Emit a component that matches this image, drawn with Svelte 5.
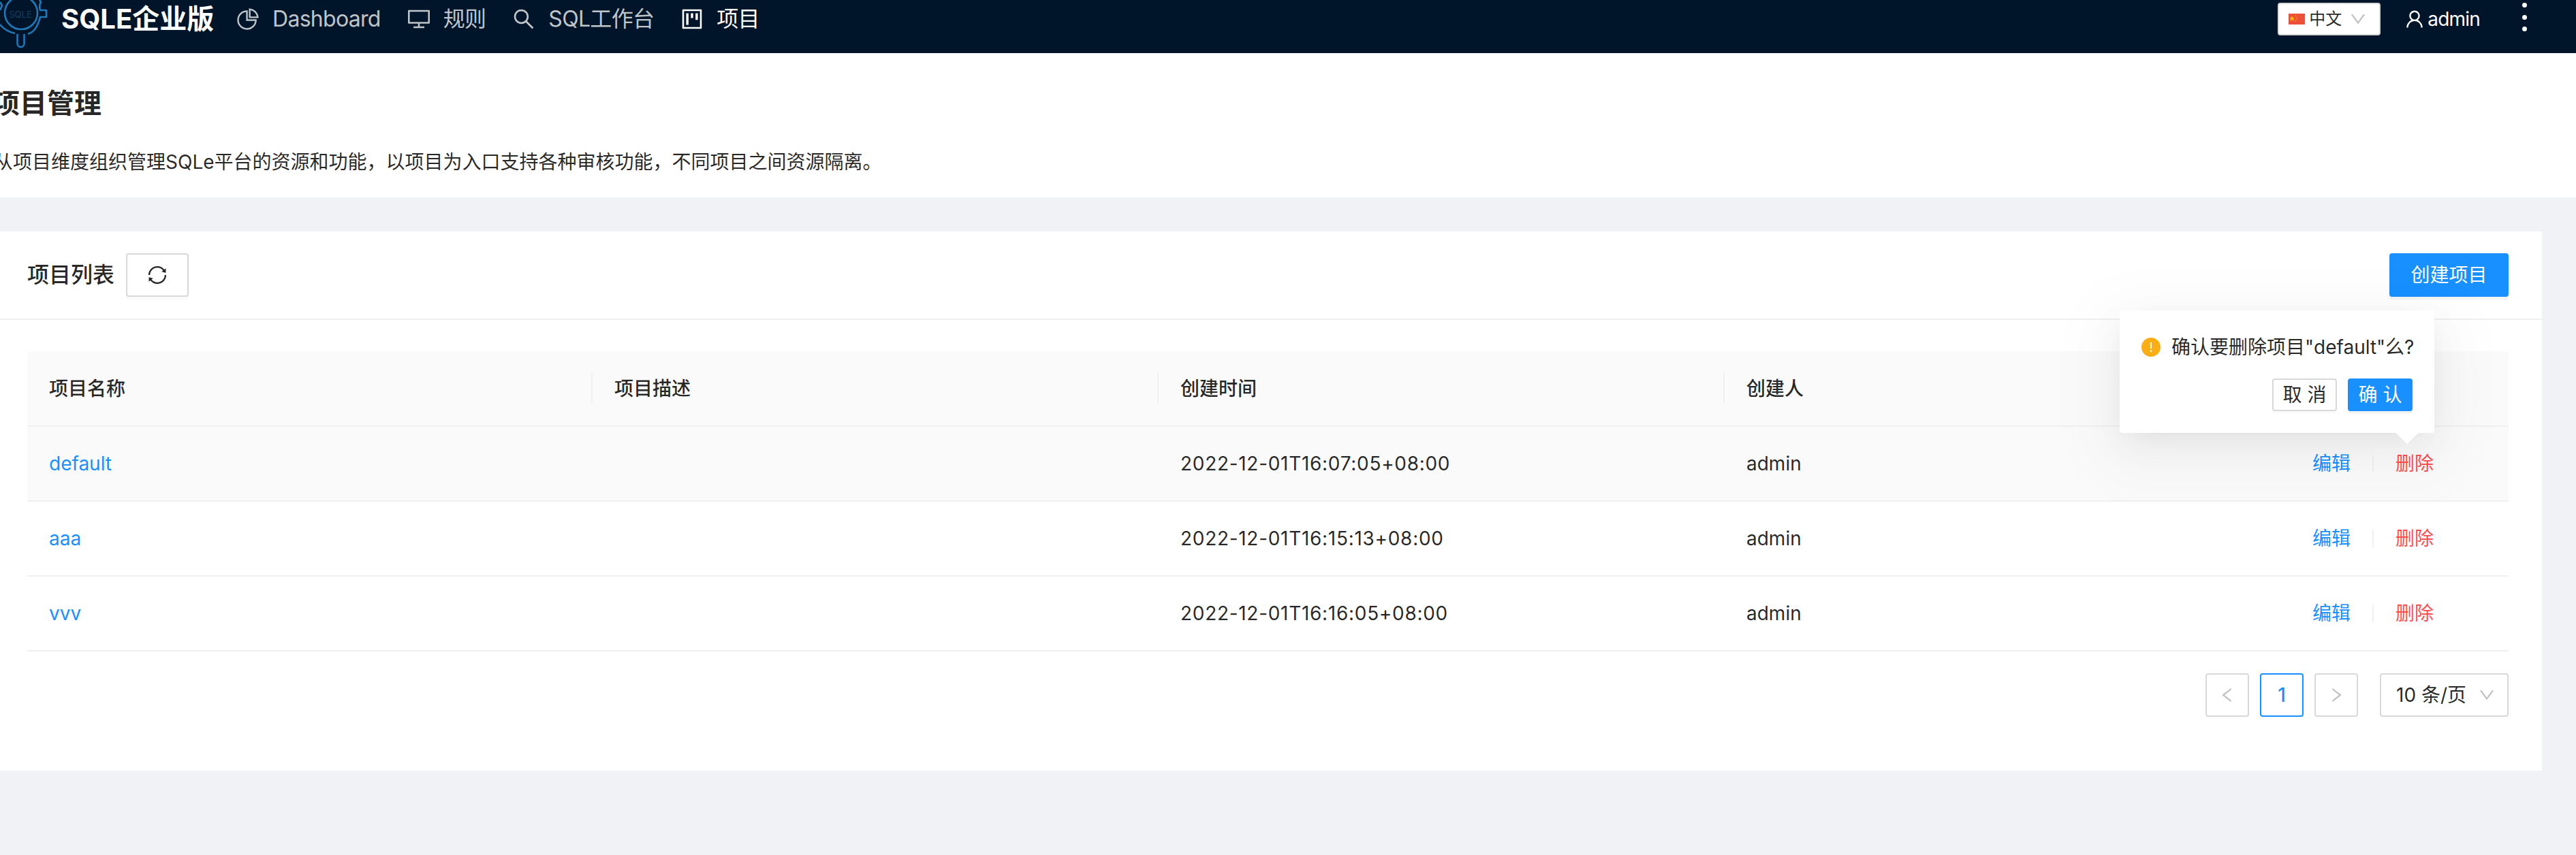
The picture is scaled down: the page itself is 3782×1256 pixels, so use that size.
<script lang="ts">
	const rows = [
		{ name: 'default', time: '2022-12-01T16:07:05+08:00', creator: 'admin', active: true },
		{ name: 'aaa', time: '2022-12-01T16:15:13+08:00', creator: 'admin', active: false },
		{ name: 'vvv', time: '2022-12-01T16:16:05+08:00', creator: 'admin', active: false }
	];

	const paths = {
		pie: 'M864 518H506V160c0-4.4-3.6-8-8-8h-26a398.46 398.46 0 0 0-282.8 117.1 398.19 398.19 0 0 0-85.7 127.1A397.61 397.61 0 0 0 72 552a398.46 398.46 0 0 0 117.1 282.8c36.7 36.7 79.5 65.6 127.1 85.7A397.61 397.61 0 0 0 472 952a398.46 398.46 0 0 0 282.8-117.1c36.7-36.7 65.6-79.5 85.7-127.1A397.61 397.61 0 0 0 872 552v-26c0-4.4-3.6-8-8-8zM705.7 787.8A331.59 331.59 0 0 1 470.4 884c-88.1-.4-170.9-34.9-233.2-97.2C174.5 724.1 140 640.7 140 552c0-88.7 34.5-172.1 97.2-234.8 54.6-54.6 124.9-87.9 200.8-95.5V586h364.3c-7.7 76.3-41.3 147-96.6 201.8zM952 462.4l-2.6-28.2c-8.5-92.1-49.4-179-115.2-244.6A399.4 399.4 0 0 0 589 74.6L560.7 72c-4.7-.4-8.7 3.2-8.7 7.9V464c0 4.4 3.6 8 8 8l384-1c4.7 0 8.4-4 8-8.6zm-332.2-58.2V147.6a332.24 332.24 0 0 1 166.4 89.8c45.7 45.6 77 103.6 90 166.1l-256.4.7z',
		desktop: 'M928 140H96c-17.7 0-32 14.3-32 32v496c0 17.7 14.3 32 32 32h380v112H304c-8.8 0-16 7.2-16 16v48c0 4.4 3.6 8 8 8h432c4.4 0 8-3.6 8-8v-48c0-8.8-7.2-16-16-16H548V700h380c17.7 0 32-14.3 32-32V172c0-17.7-14.3-32-32-32zm-40 488H136V212h752v416z',
		search: 'M909.6 854.5L649.9 594.8C690.2 542.7 712 479 712 412c0-80.2-31.3-155.4-87.9-212.1-56.6-56.7-132-87.9-212.1-87.9s-155.5 31.3-212.1 87.9C143.2 256.5 112 331.8 112 412c0 80.1 31.3 155.5 87.9 212.1C256.5 680.8 331.8 712 412 712c67 0 130.6-21.8 182.7-62l259.7 259.6a8.2 8.2 0 0 0 11.6 0l43.6-43.5a8.2 8.2 0 0 0 0-11.6zM570.4 570.4C528 612.7 471.8 636 412 636s-116-23.3-158.4-65.6C211.3 528 188 471.8 188 412s23.3-116.1 65.6-158.4C296 211.3 352.2 188 412 188s116.1 23.2 158.4 65.6S636 352.2 636 412s-23.3 116.1-65.6 158.4z',
		project: 'M280 752h80c4.4 0 8-3.6 8-8V280c0-4.4-3.6-8-8-8h-80c-4.4 0-8 3.6-8 8v464c0 4.4 3.6 8 8 8zm192-280h80c4.4 0 8-3.6 8-8V280c0-4.4-3.6-8-8-8h-80c-4.4 0-8 3.6-8 8v184c0 4.4 3.6 8 8 8zm192 72h80c4.4 0 8-3.6 8-8V280c0-4.4-3.6-8-8-8h-80c-4.4 0-8 3.6-8 8v256c0 4.4 3.6 8 8 8zm216-432H144c-17.7 0-32 14.3-32 32v736c0 17.7 14.3 32 32 32h736c17.7 0 32-14.3 32-32V144c0-17.7-14.3-32-32-32zm-40 728H184V184h656v656z',
		user: 'M858.5 763.6a374 374 0 0 0-80.6-119.5 375.63 375.63 0 0 0-119.5-80.6c-.4-.2-.8-.3-1.2-.5C719.5 518 760 444.7 760 362c0-137-111-248-248-248S264 225 264 362c0 82.7 40.5 156 102.8 201.1-.4.2-.8.3-1.2.5-44.8 18.9-85 46-119.5 80.6a375.63 375.63 0 0 0-80.6 119.5A371.7 371.7 0 0 0 136 901.8a8 8 0 0 0 8 8.2h60c4.4 0 8-3.5 8-7.8 2-77.2 33-149.5 87.8-204.3 56.7-56.7 132-87.9 212.2-87.9s155.5 31.2 212.2 87.9C779 752.7 810 825 812 902.2c.1 4.4 3.6 7.8 8 7.8h60a8 8 0 0 0 8-8.2c-1-47.8-10.9-94.3-29.5-138.2zM512 534c-45.9 0-89.1-17.9-121.6-50.4S340 407.9 340 362c0-45.9 17.9-89.1 50.4-121.6S466.1 190 512 190s89.1 17.9 121.6 50.4S684 316.1 684 362c0 45.9-17.9 89.1-50.4 121.6S557.9 534 512 534z',
		sync: 'M168 504.2c1-43.7 10-86.1 26.9-126 17.3-41 42.1-77.7 73.7-109.4S337 212.3 378 195c42.4-17.9 87.4-27 133.9-27s91.5 9.1 133.8 27A341.5 341.5 0 0 1 755 268.8c9.9 9.9 19.2 20.4 27.8 31.4l-60.2 47a8 8 0 0 0 3 14.1l175.7 43c5 1.2 9.9-2.6 9.9-7.7l.8-180.9c0-6.7-7.7-10.5-12.9-6.3l-56.4 44.1C765.8 155.1 646.2 92 511.8 92 282.7 92 96.3 275.6 92 503.8a8 8 0 0 0 8 8.2h60c4.4 0 7.9-3.5 8-7.8zm756 7.8h-60c-4.4 0-7.9 3.5-8 7.8-1 43.7-10 86.1-26.9 126-17.3 41-42.1 77.8-73.7 109.4A342.45 342.45 0 0 1 512.1 856a342.24 342.24 0 0 1-243.2-100.8c-9.9-9.9-19.2-20.4-27.8-31.4l60.2-47a8 8 0 0 0-3-14.1l-175.7-43c-5-1.2-9.9 2.6-9.9 7.7l-.7 181c0 6.7 7.7 10.5 12.9 6.3l56.4-44.1C258.2 868.9 377.8 932 512.2 932c229.2 0 415.5-183.7 419.8-411.8a8 8 0 0 0-8-8.2z',
		warn: 'M512 64C264.6 64 64 264.6 64 512s200.6 448 448 448 448-200.6 448-448S759.4 64 512 64zm-32 232c0-4.4 3.6-8 8-8h48c4.4 0 8 3.6 8 8v272c0 4.4-3.6 8-8 8h-48c-4.4 0-8-3.6-8-8V296zm32 440a48.01 48.01 0 0 1 0-96 48.01 48.01 0 0 1 0 96z',
		down: 'M884 256h-75c-5.1 0-9.9 2.5-12.9 6.6L512 654.2 227.9 262.6c-3-4.1-7.8-6.6-12.9-6.6h-75c-6.5 0-10.3 7.4-6.5 12.7l352.6 486.1c12.8 17.6 39 17.6 51.7 0l352.6-486.1c3.9-5.3.1-12.7-6.4-12.7z',
		left: 'M724 218.3V141c0-6.7-7.7-10.4-12.9-6.3L260.3 486.8a31.86 31.86 0 0 0 0 50.3l450.8 352.1c5.3 4.1 12.9.4 12.9-6.3v-77.3c0-4.9-2.3-9.6-6.1-12.6l-360-281 360-281.1c3.8-3 6.1-7.7 6.1-12.6z',
		right: 'M765.7 486.8L314.9 134.7A7.97 7.97 0 0 0 302 141v77.3c0 4.9 2.3 9.6 6.1 12.6l360 281.1-360 281.1c-3.9 3-6.1 7.7-6.1 12.6V883c0 6.7 7.7 10.4 12.9 6.3l450.8-352.1a31.96 31.96 0 0 0 0-50.4z'
	};

	const nav = [
		{ label: 'Dashboard', icon: paths.pie, active: false },
		{ label: '规则', icon: paths.desktop, active: false },
		{ label: 'SQL工作台', icon: paths.search, active: false },
		{ label: '项目', icon: paths.project, active: true }
	];

	// full-width comma, written as an escape so it survives copying
	const intro = '从项目维度组织管理SQLe平台的资源和功能\uFF0C以项目为入口支持各种审核功能\uFF0C不同项目之间资源隔离。';
</script>

<div class="app">
	<header class="topbar">
		<div class="brand">
			<svg class="logo" viewBox="0 0 70 78" fill="none" stroke="#1f78b8" stroke-width="2.6">
				<circle cx="31" cy="19" r="24" />
				<path d="M41 50 Q54 46 59 25 H68 V15 H59 Q57 8 60 3 L58 0 M22 49 Q8 46 0 36 M0 15 L3 8 L0 3" stroke-linejoin="round" />
				<path d="M25.5 50 V64 a5 5 0 0 0 10 0 V50" />
				<text x="30" y="26" text-anchor="middle" class="logo-text">SQLE</text>
			</svg>
			<span class="brand-name">SQLE企业版</span>
		</div>
		<nav class="menu">
			{#each nav as item}
				<div class="menu-item" class:active={item.active}>
					<svg class="icon" viewBox="64 64 896 896" fill="currentColor"><path d={item.icon} /></svg>
					<span>{item.label}</span>
				</div>
			{/each}
		</nav>
		<div class="right">
			<div class="lang">
				<svg class="flag" viewBox="0 0 24 16">
					<rect width="24" height="16" fill="#ee4f38" />
					<polygon points="5,3 6,6 9,6 6.6,7.8 7.5,11 5,9 2.5,11 3.4,7.8 1,6 4,6" fill="#ffc400" />
					<circle cx="10.5" cy="3" r="0.7" fill="#ffc400" />
					<circle cx="12" cy="5.5" r="0.7" fill="#ffc400" />
					<circle cx="12" cy="8" r="0.7" fill="#ffc400" />
					<circle cx="10.5" cy="10.5" r="0.7" fill="#ffc400" />
				</svg>
				<span class="lang-text">中文</span>
				<svg class="chev" viewBox="64 64 896 896" fill="currentColor"><path d={paths.down} /></svg>
			</div>
			<div class="user">
				<svg class="user-icon" viewBox="64 64 896 896" fill="currentColor"><path d={paths.user} /></svg>
				<span class="user-name">admin</span>
			</div>
			<div class="more"><i></i><i></i><i></i></div>
		</div>
	</header>

	<section class="page-head">
		<h1>项目管理</h1>
		<p>{intro}</p>
	</section>

	<main class="content">
		<div class="card">
			<div class="card-head">
				<div class="card-title">
					<span>项目列表</span>
					<button class="btn refresh" aria-label="刷新">
						<svg class="sync" viewBox="64 64 896 896" fill="currentColor"><path d={paths.sync} /></svg>
					</button>
				</div>
				<button class="btn primary create">创建项目</button>
			</div>

			<div class="card-body">
				<table>
					<thead>
						<tr>
							<th>项目名称</th>
							<th>项目描述</th>
							<th>创建时间</th>
							<th>创建人</th>
							<th></th>
						</tr>
					</thead>
					<tbody>
						{#each rows as row}
							<tr class:hover={row.active}>
								<td><span class="link">{row.name}</span></td>
								<td></td>
								<td class="time">{row.time}</td>
								<td>{row.creator}</td>
								<td>
									<div class="actions">
										<span class="link">编辑</span>
										<span class="divider"></span>
										<span class="danger">删除</span>
									</div>
								</td>
							</tr>
						{/each}
					</tbody>
				</table>

				<div class="pager">
					<div class="page-btn">
						<svg class="page-arrow" viewBox="64 64 896 896" fill="currentColor"><path d={paths.left} /></svg>
					</div>
					<div class="page-btn current">1</div>
					<div class="page-btn">
						<svg class="page-arrow" viewBox="64 64 896 896" fill="currentColor"><path d={paths.right} /></svg>
					</div>
					<div class="size-select">
						<span>10 条/页</span>
						<svg class="chev" viewBox="64 64 896 896" fill="currentColor"><path d={paths.down} /></svg>
					</div>
				</div>
			</div>

			<div class="popover">
				<div class="pop-msg">
					<svg class="warn" viewBox="64 64 896 896" fill="#faad14"><path d={paths.warn} /></svg>
					<span>确认要删除项目"default"么?</span>
				</div>
				<div class="pop-actions">
					<button class="btn small">取 消</button>
					<button class="btn small primary">确 认</button>
				</div>
				<span class="arrow"></span>
			</div>
		</div>
	</main>
</div>

<style>
	:global(body) {
		margin: 0;
		background: #f0f2f5;
	}

	.app {
		width: 3782px;
		height: 1256px;
		overflow: hidden;
		background: #f0f2f5;
		font-family: Inter, 'Noto Sans CJK SC', sans-serif;
		font-size: 28px;
		line-height: 44px;
		color: rgba(0, 0, 0, 0.85);
	}

	.topbar {
		height: 78px;
		background: #001529;
		display: flex;
		align-items: flex-start;
		color: #fff;
	}

	.brand {
		display: flex;
		align-items: flex-start;
		width: 348px;
		flex: none;
		height: 78px;
	}

	.logo {
		width: 70px;
		height: 78px;
		flex: none;
		margin-right: 20px;
	}

	.logo-text {
		font-size: 13px;
		fill: #12405f;
		stroke: none;
	}

	.brand-name {
		font-size: 40px;
		line-height: 56px;
		font-weight: 700;
		white-space: nowrap;
	}

	.menu {
		display: flex;
		gap: 40px;
		height: 56px;
		font-size: 32px;
		letter-spacing: -0.7px;
		color: rgba(255, 255, 255, 0.75);
	}

	.menu-item {
		display: flex;
		align-items: center;
		gap: 20px;
		white-space: nowrap;
	}

	.menu-item.active {
		color: #fff;
	}

	.icon {
		width: 32px;
		height: 32px;
	}

	.right {
		margin-left: auto;
		display: flex;
		align-items: center;
		height: 56px;
		padding-right: 72px;
	}

	.lang {
		width: 151px;
		height: 48px;
		box-sizing: border-box;
		background: #fff;
		border: 2px solid #d9d9d9;
		border-radius: 4px;
		display: flex;
		align-items: center;
		padding-left: 14px;
		color: rgba(0, 0, 0, 0.85);
	}

	.flag {
		width: 24px;
		height: 16px;
	}

	.lang-text {
		font-size: 24px;
		margin-left: 6px;
	}

	.chev {
		width: 24px;
		height: 24px;
		color: #bfbfbf;
		margin-left: 12px;
	}

	.user {
		display: flex;
		align-items: center;
		margin-left: 36px;
	}

	.user-icon {
		width: 28px;
		height: 28px;
		margin-right: 5px;
	}

	.user-name {
		letter-spacing: -0.8px;
	}

	.more {
		display: flex;
		flex-direction: column;
		gap: 10.5px;
		margin-left: 62px;
		margin-top: -6px;
	}

	.more i {
		display: block;
		width: 7px;
		height: 7px;
		border-radius: 50%;
		background: #fff;
	}

	.page-head {
		height: 212px;
		box-sizing: border-box;
		background: #fff;
		padding-top: 50px;
	}

	h1 {
		margin: 0 0 0 -11px;
		font-size: 40px;
		line-height: 48px;
		font-weight: 600;
	}

	.page-head p {
		margin: 40px 0 0 -9px;
		white-space: nowrap;
	}

	.content {
		padding: 50px 50px 0 0;
	}

	.card {
		position: relative;
		height: 792px;
		background: #fff;
	}

	.card-head {
		height: 130px;
		box-sizing: border-box;
		border-bottom: 2px solid #f0f0f0;
		padding: 32px 49px 0 40px;
		display: flex;
		justify-content: space-between;
		align-items: flex-start;
	}

	.card-title {
		display: flex;
		align-items: center;
		gap: 17px;
		font-size: 32px;
		font-weight: 500;
		height: 64px;
	}

	.btn {
		font-family: inherit;
		font-size: 28px;
		height: 64px;
		box-sizing: border-box;
		border: 2px solid #d9d9d9;
		border-radius: 4px;
		background: #fff;
		color: rgba(0, 0, 0, 0.85);
		box-shadow: 0 4px 0 rgba(0, 0, 0, 0.015);
		padding: 0;
		line-height: 1;
	}

	.btn.primary {
		background: #1890ff;
		border-color: #1890ff;
		color: #fff;
		box-shadow: 0 4px 0 rgba(0, 0, 0, 0.045);
	}

	.refresh {
		width: 92px;
		display: flex;
		align-items: center;
		justify-content: center;
	}

	.sync {
		width: 28px;
		height: 28px;
	}

	.create {
		width: 175px;
	}

	.card-body {
		padding: 46px 49px 0 40px;
	}

	table {
		width: 3643px;
		border-collapse: collapse;
		table-layout: fixed;
	}

	th {
		position: relative;
		background: #fafafa;
		font-weight: 500;
		text-align: left;
		padding: 32px;
		border-bottom: 2px solid #f0f0f0;
		height: 110px;
		box-sizing: border-box;
	}

	th:first-child {
		width: 830px;
		border-top-left-radius: 4px;
	}

	th:nth-child(2),
	th:nth-child(3),
	th:nth-child(4) {
		width: 831px;
	}

	th:not(:last-child)::after {
		content: '';
		position: absolute;
		right: 0;
		top: 32px;
		width: 2px;
		height: 44px;
		background: #f0f0f0;
	}

	td {
		padding: 32px;
		border-bottom: 2px solid #f0f0f0;
		height: 110px;
		box-sizing: border-box;
		white-space: nowrap;
	}

	td.time {
		letter-spacing: 0.7px;
	}

	tr.hover td {
		background: #fafafa;
	}

	.actions {
		display: flex;
		align-items: center;
	}

	.link {
		color: #1890ff;
	}

	.danger {
		color: #ff4d4f;
	}

	.divider {
		width: 2px;
		height: 26px;
		margin: 0 32px;
		background: #f0f0f0;
	}

	.pager {
		display: flex;
		justify-content: flex-end;
		margin-top: 32px;
		gap: 16px;
	}

	.page-btn {
		width: 64px;
		height: 64px;
		box-sizing: border-box;
		border: 2px solid #d9d9d9;
		border-radius: 4px;
		display: flex;
		align-items: center;
		justify-content: center;
		color: #bfbfbf;
	}

	.page-btn.current {
		border-color: #1890ff;
		color: #1890ff;
		font-weight: 500;
	}

	.page-arrow {
		width: 24px;
		height: 24px;
	}

	.size-select {
		width: 189px;
		height: 64px;
		box-sizing: border-box;
		margin-left: 16px;
		border: 2px solid #d9d9d9;
		border-radius: 4px;
		display: flex;
		align-items: center;
		padding-left: 22px;
		white-space: nowrap;
	}

	.size-select .chev {
		margin-left: auto;
		margin-right: 18px;
	}

	.popover {
		position: absolute;
		top: 116px;
		left: 3112px;
		width: 462px;
		height: 180px;
		box-sizing: border-box;
		padding: 32px 32px 0;
		background: #fff;
		border-radius: 4px;
		box-shadow:
			0 6px 32px -16px rgba(0, 0, 0, 0.08),
			0 18px 56px 0 rgba(0, 0, 0, 0.05),
			0 24px 96px 32px rgba(0, 0, 0, 0.03);
	}

	.pop-msg {
		display: flex;
		align-items: center;
		gap: 16px;
		white-space: nowrap;
	}

	.warn {
		width: 28px;
		height: 28px;
		flex: none;
	}

	.pop-actions {
		display: flex;
		justify-content: flex-end;
		gap: 16px;
		margin-top: 24px;
	}

	.btn.small {
		height: 48px;
		width: 95px;
		line-height: 1;
	}

	.arrow {
		position: absolute;
		left: 410px;
		bottom: -12px;
		width: 24px;
		height: 24px;
		background: #fff;
		transform: rotate(45deg);
		box-shadow: 6px 6px 14px rgba(0, 0, 0, 0.07);
		clip-path: polygon(100% 0, 100% 100%, 0 100%);
	}
</style>
